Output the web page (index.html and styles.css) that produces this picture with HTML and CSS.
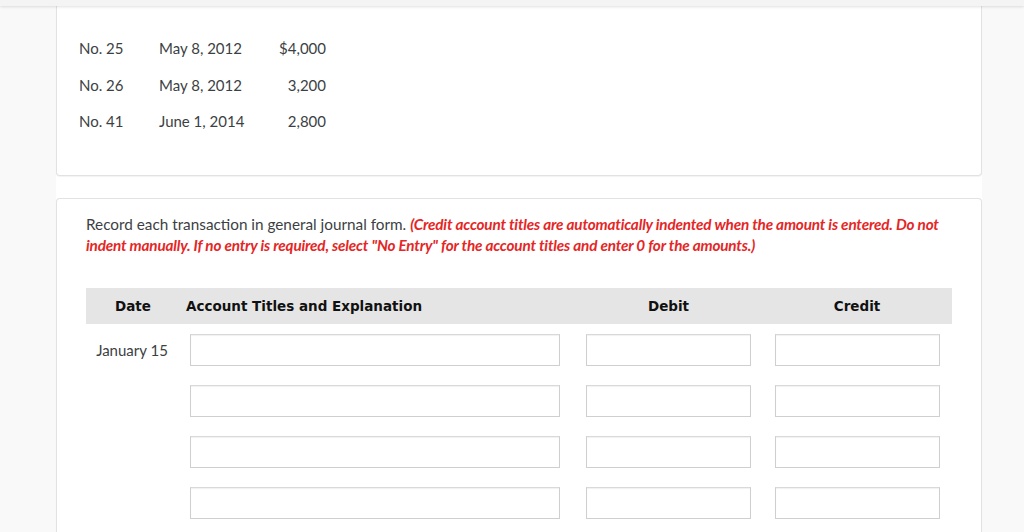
FILE: index.html
```html
<!DOCTYPE html>
<html>
<head>
<meta charset="utf-8">
<link rel="stylesheet" href="styles.css">
</head>
<body>
<div class="topbar"></div>
<div class="column">
  <div class="card card-top">
    <div class="bonds">
      <div class="bond-row"><span class="c-no">No. 25</span><span class="c-date">May 8, 2012</span><span class="c-amt">$4,000</span></div>
      <div class="bond-row"><span class="c-no">No. 26</span><span class="c-date">May 8, 2012</span><span class="c-amt">3,200</span></div>
      <div class="bond-row"><span class="c-no">No. 41</span><span class="c-date">June 1, 2014</span><span class="c-amt">2,800</span></div>
    </div>
  </div>
  <div class="card card-main">
    <p class="instr">Record each transaction in general journal form. <em class="note">(Credit account titles are automatically indented when the amount is entered. Do not indent manually. If no entry is required, select "No Entry" for the account titles and enter 0 for the amounts.)</em></p>
    <div class="journal">
      <div class="jhead">
        <div class="h-date">Date</div>
        <div class="h-acct">Account Titles and Explanation</div>
        <div class="h-num">Debit</div>
        <div class="h-num">Credit</div>
      </div>
      <div class="jrow">
        <div class="d-date">January 15</div>
        <div class="d-acct"><input class="fld" type="text"></div>
        <div class="d-num"><input class="fld" type="text"></div>
        <div class="d-num"><input class="fld" type="text"></div>
      </div>
      <div class="jrow">
        <div class="d-date"></div>
        <div class="d-acct"><input class="fld" type="text"></div>
        <div class="d-num"><input class="fld" type="text"></div>
        <div class="d-num"><input class="fld" type="text"></div>
      </div>
      <div class="jrow">
        <div class="d-date"></div>
        <div class="d-acct"><input class="fld" type="text"></div>
        <div class="d-num"><input class="fld" type="text"></div>
        <div class="d-num"><input class="fld" type="text"></div>
      </div>
      <div class="jrow">
        <div class="d-date"></div>
        <div class="d-acct"><input class="fld" type="text"></div>
        <div class="d-num"><input class="fld" type="text"></div>
        <div class="d-num"><input class="fld" type="text"></div>
      </div>
    </div>
  </div>
</div>
</body>
</html>
```

FILE: styles.css
```css
html, body {
  margin: 0;
  padding: 0;
}
body {
  background: #f9f9f9;
  font-family: Lato, "Open Sans", sans-serif;
  color: #3c3f44;
  height: 532px;
  overflow: hidden;
}
.topbar {
  height: 6px;
  background: #f4f4f4;
  box-shadow: 0 1px 3px rgba(0,0,0,0.12);
  position: relative;
  z-index: 2;
}
.column {
  margin-left: 56px;
  width: 926px;
  background: #fff;
  height: 526px;
}
.card {
  background: #fff;
  border: 1px solid #e2e2e2;
  border-radius: 4px;
  box-shadow: 0 1px 1px rgba(0,0,0,0.05);
}
.card-top {
  border-top: none;
  border-top-left-radius: 0;
  border-top-right-radius: 0;
  height: 170px;
  box-sizing: border-box;
  padding: 24px 0 0 22px;
}
.bond-row {
  display: flex;
  align-items: center;
  height: 36.5px;
  font-size: 15px;
}
.c-no { width: 80px; }
.c-date { width: 90px; }
.c-amt { width: 77px; text-align: right; }
.card-main {
  margin-top: 22px;
  padding: 15px 0 0 29px;
  height: 400px;
  box-sizing: border-box;
  border-bottom: none;
}
.instr {
  margin: 0;
  font-size: 15.3px;
  line-height: 21px;
  width: 870px;
}
.note {
  color: #e52626;
  font-style: italic;
  font-weight: bold;
  letter-spacing: -0.18px;
}
.journal {
  margin-top: 32px;
  width: 866px;
  display: flex;
  flex-direction: column;
  gap: 19px;
}
.jhead {
  display: grid;
  grid-template-columns: 94px 395px 187px 190px;
  background: #e5e5e5;
  height: 36px;
  align-items: center;
  font-family: "DejaVu Sans", Verdana, sans-serif;
  font-weight: bold;
  font-size: 13.5px;
  color: #111;
  margin-bottom: -9px;
}
.h-date { text-align: center; }
.h-acct { padding-left: 6px; }
.h-num { text-align: center; }
.jrow {
  display: grid;
  grid-template-columns: 94px 395px 187px 190px;
  align-items: center;
  height: 32px;
}
.d-date {
  text-align: center;
  font-size: 15px;
  padding-right: 2px;
}
.d-acct { padding-left: 10px; }
.d-acct .fld { width: 370px; }
.d-num { display: flex; justify-content: center; }
.d-num .fld { width: 165px; }
.fld {
  box-sizing: border-box;
  height: 32px;
  border: 1px solid #cfcfcf;
  border-top-color: #d9d9d9;
  box-shadow: inset 0 1px 1px rgba(0,0,0,0.06);
  border-radius: 0;
  background: #fff;
  margin: 0;
  padding: 0 6px;
  display: block;
}
```
